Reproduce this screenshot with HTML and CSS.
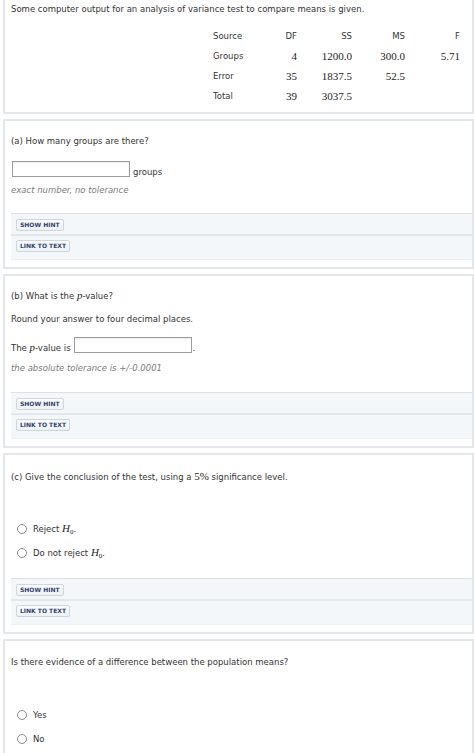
FILE: index.html
```html
<!DOCTYPE html>
<html lang="en">
<head>
<meta charset="utf-8">
<title>Analysis of variance question</title>
<link rel="stylesheet" href="styles.css">
</head>
<body>
<section class="panel panel-intro">
  <p class="line">Some computer output for an analysis of variance test to compare means is given.</p>
  <div class="anova">
    <span class="hd">Source</span><span class="hd r">DF</span><span class="hd r">SS</span><span class="hd r">MS</span><span class="hd r">F</span>
    <span class="hd">Groups</span><span class="num">4</span><span class="num">1200.0</span><span class="num">300.0</span><span class="num">5.71</span>
    <span class="hd">Error</span><span class="num">35</span><span class="num">1837.5</span><span class="num">52.5</span><span></span>
    <span class="hd">Total</span><span class="num">39</span><span class="num">3037.5</span><span></span><span></span>
  </div>
</section>

<section class="panel panel-a">
  <p class="line">(a) How many groups are there?</p>
  <div class="answer-row answer-row-a">
    <span class="box box-a"></span><span class="after">groups</span>
  </div>
  <p class="line note note-a">exact number, no tolerance</p>
  <div class="tools">
    <div class="tool-row tool-top"><span class="btn">SHOW HINT</span></div>
    <div class="tool-row tool-bottom"><span class="btn">LINK TO TEXT</span></div>
  </div>
</section>

<section class="panel panel-b">
  <p class="line">(b) What is the <span class="math">p</span>-value?</p>
  <p class="line round">Round your answer to four decimal places.</p>
  <div class="answer-row answer-row-b">
    <span class="before">The <span class="math">p</span>-value is</span><span class="box box-b"></span><span class="after dot">.</span>
  </div>
  <p class="line note note-b">the absolute tolerance is +/-0.0001</p>
  <div class="tools">
    <div class="tool-row tool-top"><span class="btn">SHOW HINT</span></div>
    <div class="tool-row tool-bottom"><span class="btn">LINK TO TEXT</span></div>
  </div>
</section>

<section class="panel panel-c">
  <p class="line">(c) Give the conclusion of the test, using a <span class="math up">5%</span> significance level.</p>
  <div class="choices choices-c">
    <div class="choice"><span class="radio"></span><span class="label">Reject <span class="math">H<sub>0</sub></span>.</span></div>
    <div class="choice"><span class="radio"></span><span class="label">Do not reject <span class="math">H<sub>0</sub></span>.</span></div>
  </div>
  <div class="tools">
    <div class="tool-row tool-top"><span class="btn">SHOW HINT</span></div>
    <div class="tool-row tool-bottom"><span class="btn">LINK TO TEXT</span></div>
  </div>
</section>

<section class="panel panel-d">
  <p class="line">Is there evidence of a difference between the population means?</p>
  <div class="choices choices-d">
    <div class="choice"><span class="radio"></span><span class="label">Yes</span></div>
    <div class="choice"><span class="radio"></span><span class="label">No</span></div>
  </div>
</section>
</body>
</html>
```

FILE: styles.css
```css
* { box-sizing: border-box; }
html, body { margin: 0; padding: 0; background: #fff; }
body {
  width: 474px;
  font-family: "DejaVu Sans", Verdana, sans-serif;
  font-size: 8.5px;
  color: #333;
  overflow: hidden;
}
p { margin: 0; }

.panel {
  margin: 0 0 5px 3px;
  border: 2px solid #e3e6ea;
  padding: 14px 0 7px 6px;
}
.panel-intro { border-top: none; padding-top: 3px; padding-bottom: 6px; }
.panel-c { padding-top: 16px; }
.panel-d { padding-top: 15px; padding-bottom: 20px; }

.line { line-height: 12px; height: 12px; white-space: nowrap; }

.math {
  font-family: "Liberation Serif", "DejaVu Serif", serif;
  font-style: italic;
  font-size: 11px;
  line-height: 1;
  color: #222;
}
.math.up { font-style: normal; }
.math sub { font-style: normal; font-size: 7px; vertical-align: -2px; line-height: 1; }

/* ANOVA table */
.anova {
  margin: 11px 0 0 202px;
  display: grid;
  grid-template-columns: 49px 35px 55px 53px 55px;
  grid-auto-rows: 20px;
  align-items: center;
}
.anova .hd { line-height: 12px; }
.anova .r { text-align: right; }
.anova .num {
  text-align: right;
  font-family: "Liberation Serif", "DejaVu Serif", serif;
  font-size: 11px;
  color: #222;
  line-height: 12px;
}

/* answer rows */
.answer-row { display: flex; align-items: flex-end; height: 16px; }
.answer-row-a { margin-top: 14px; margin-left: 1px; }
.answer-row-b { margin-top: 12px; }
.box {
  display: block;
  height: 16px;
  border: 1px solid #9c9c9c;
  background: #fff;
  box-shadow: inset 0 1px 1px rgba(0,0,0,0.08);
}
.box-a { width: 118px; }
.box-b { width: 118px; margin-left: 3px; }
.after, .before { line-height: 12px; margin-bottom: -1px; }
.after { margin-left: 3px; }
.dot { margin-left: 1px; }
.round { margin-top: 11px; }

.note { color: #7b7b7b; font-style: italic; }
.note-a { margin-top: 7px; }
.note-b { margin-top: 9px; }

/* hint/link tools */
.tools {
  margin-top: 17px;
  background: #f4f7fa;
  border-top: 1px solid #dde1e6;
  border-bottom: 1px solid #eef1f4;
}
.panel-b .tools { margin-top: 18px; }
.panel-c .tools { margin-top: 13px; }
.tool-row { padding-left: 5px; }
.tool-top { padding-top: 5px; padding-bottom: 3px; }
.tool-bottom { border-top: 2px solid #e3e6ea; padding-top: 4px; padding-bottom: 7px; }
.btn {
  display: inline-block;
  height: 12px;
  line-height: 10px;
  padding: 0 3px;
  font-size: 6px;
  font-weight: bold;
  color: #2d4270;
  background: linear-gradient(#fbfcfd, #eef1f5);
  border: 1px solid #cfd5dc;
  border-radius: 2px;
  white-space: nowrap;
}

/* radio choices */
.choices-c { margin-top: 34px; }
.choices-d { margin-top: 35px; }
.choice { display: flex; align-items: center; height: 24px; }
.radio {
  width: 10px;
  height: 10px;
  margin-left: 6px;
  border: 1px solid #8a8a8a;
  border-radius: 50%;
  background: #fff;
  flex: none;
}
.label { margin-left: 6px; line-height: 12px; white-space: nowrap; }
```
